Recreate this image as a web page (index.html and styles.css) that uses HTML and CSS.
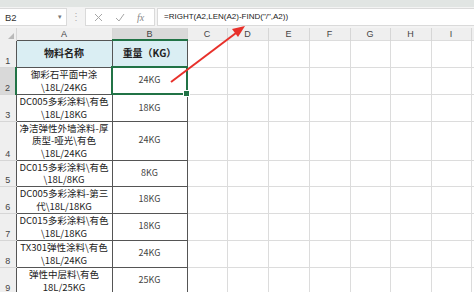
FILE: index.html
```html
<!DOCTYPE html>
<html lang="zh-CN">
<head>
    <meta charset="UTF-8">
    <title>物料重量</title>
    <link rel="stylesheet" href="styles.css">
</head>
<body>
    <div class="topband"></div>

    <div class="formula-bar">
        <div class="name-box"><span>B2</span><span class="caret">&#9662;</span></div>
        <div class="sep">&#8942;</div>
        <div class="fn-box">
            <svg class="ic" width="9" height="9" viewBox="0 0 9 9"><path d="M1 1L8 8M8 1L1 8" stroke="#a6a6a6" stroke-width="1" fill="none"/></svg>
            <svg class="ic" width="10" height="9" viewBox="0 0 10 9"><path d="M1 5L4 8L9 1" stroke="#a6a6a6" stroke-width="1" fill="none"/></svg>
            <span class="fx">fx</span>
        </div>
        <div class="formula">=RIGHT(A2,LEN(A2)-FIND("/",A2))</div>
    </div>

    <table class="sheet">
        <colgroup>
            <col class="w-hd"><col class="w-a"><col class="w-b">
            <col class="w-40"><col class="w-41"><col class="w-41"><col class="w-41">
            <col class="w-40"><col class="w-41"><col class="w-40"><col class="w-end">
        </colgroup>
        <thead>
            <tr class="r-hd">
                <th class="corner"><span class="tri"></span></th>
                <th>A</th><th class="sel">B</th><th>C</th><th>D</th><th>E</th>
                <th>F</th><th>G</th><th>H</th><th>I</th><th></th>
            </tr>
        </thead>
        <tbody>
            <tr class="h27">
                <th class="rn">1</th>
                <td class="t head">物料名称</td>
                <td class="t head">重量（KG）</td>
                <td></td><td></td><td></td><td></td><td></td><td></td><td></td><td></td>
            </tr>
            <tr class="h27 cur">
                <th class="rn">2</th>
                <td class="t">御彩石平面中涂<br>\18L/24KG</td>
                <td class="t w sel">24KG</td>
                <td></td><td></td><td></td><td></td><td></td><td></td><td></td><td></td>
            </tr>
            <tr class="h27">
                <th class="rn">3</th>
                <td class="t">DC005多彩涂料\有色<br>\18L/18KG</td>
                <td class="t w">18KG</td>
                <td></td><td></td><td></td><td></td><td></td><td></td><td></td><td></td>
            </tr>
            <tr class="h39">
                <th class="rn">4</th>
                <td class="t">净洁弹性外墙涂料-厚<br>质型-哑光\有色<br>\18L/24KG</td>
                <td class="t w">24KG</td>
                <td></td><td></td><td></td><td></td><td></td><td></td><td></td><td></td>
            </tr>
            <tr class="h26">
                <th class="rn">5</th>
                <td class="t">DC015多彩涂料\有色<br>\18L/8KG</td>
                <td class="t w">8KG</td>
                <td></td><td></td><td></td><td></td><td></td><td></td><td></td><td></td>
            </tr>
            <tr class="h27">
                <th class="rn">6</th>
                <td class="t">DC005多彩涂料-第三<br>代\18L/18KG</td>
                <td class="t w">18KG</td>
                <td></td><td></td><td></td><td></td><td></td><td></td><td></td><td></td>
            </tr>
            <tr class="h27">
                <th class="rn">7</th>
                <td class="t">DC015多彩涂料\有色<br>\18L/18KG</td>
                <td class="t w">18KG</td>
                <td></td><td></td><td></td><td></td><td></td><td></td><td></td><td></td>
            </tr>
            <tr class="h27">
                <th class="rn">8</th>
                <td class="t">TX301弹性涂料\有色<br>\18L/24KG</td>
                <td class="t w">24KG</td>
                <td></td><td></td><td></td><td></td><td></td><td></td><td></td><td></td>
            </tr>
            <tr class="h27">
                <th class="rn">9</th>
                <td class="t">弹性中层料\有色<br>18L/25KG</td>
                <td class="t w">25KG</td>
                <td></td><td></td><td></td><td></td><td></td><td></td><td></td><td></td>
            </tr>
        </tbody>
    </table>

    <!-- red pointer from B2 up to the formula -->
    <svg class="arrow" width="474" height="292" viewBox="0 0 474 292">
        <line x1="171" y1="82" x2="236" y2="33" stroke="#e8302a" stroke-width="2"/>
        <polygon points="245,26 238,37 232,29" fill="#e8302a"/>
    </svg>
</body>
</html>
```

FILE: styles.css
```css
* {
    box-sizing: border-box;
}
body {
    margin: 0;
    width: 474px;
    height: 292px;
    overflow: hidden;
    position: relative;
    background-color: #fff;
    font-family: "Noto Sans CJK SC", "Liberation Sans", sans-serif;
}
.topband {
    height: 7px;
    background-color: #e1e5e3;
}
.formula-bar {
    display: flex;
    height: 21px;
    padding: 1px 0 2px;
    background-color: #f3f3f3;
    font-family: "Liberation Sans", "Noto Sans CJK SC", sans-serif;
}
.name-box {
    width: 67px;
    display: flex;
    align-items: center;
    justify-content: space-between;
    padding: 0 4px 0 5px;
    background-color: #fff;
    border: 1px solid #dadada;
    border-left: none;
    font-size: 9.5px;
    color: #333;
}
.caret {
    font-size: 7px;
    color: #777;
}
.sep {
    width: 18px;
    text-align: center;
    font-size: 10px;
    line-height: 18px;
    color: #b0b0b0;
}
.fn-box {
    width: 70px;
    display: flex;
    align-items: center;
    padding-left: 8px;
    gap: 12px;
    background-color: #fff;
    border: 1px solid #dadada;
}
.fx {
    font-family: "Liberation Serif", serif;
    font-style: italic;
    font-size: 10px;
    color: #888;
}
.formula {
    flex: 1;
    margin-left: 2px;
    padding-left: 6px;
    background-color: #fff;
    border: 1px solid #dadada;
    border-right: none;
    font-size: 8px;
    line-height: 16px;
    color: #222;
}

/* grid */
.sheet {
    width: 474px;
    table-layout: fixed;
    border-collapse: collapse;
}
.w-hd { width: 16px; }
.w-a { width: 96px; }
.w-b { width: 75px; }
.w-40 { width: 40px; }
.w-41 { width: 41px; }
.w-end { width: 3px; }

.sheet th,
.sheet td {
    padding: 0;
}
.r-hd th {
    height: 12px;
    background-color: #efefef;
    border-right: 1px solid #d6d6d6;
    font-family: "Liberation Sans", sans-serif;
    font-weight: normal;
    font-size: 9px;
    line-height: 10px;
    color: #444;
}
.r-hd th.sel {
    background-color: #d9d9d9;
    border-bottom: 2px solid #217346;
}
.corner {
    position: relative;
}
.tri {
    position: absolute;
    right: 2px;
    bottom: 1px;
    width: 0;
    height: 0;
    border-left: 6px solid transparent;
    border-bottom: 6px solid #b9b9b9;
}
.h26 { height: 26px; }
.h27 { height: 27px; }
.h39 { height: 39px; }

.rn {
    background-color: #efefef;
    border-bottom: 1px solid #d6d6d6;
    vertical-align: bottom;
    font-family: "Liberation Sans", sans-serif;
    font-weight: normal;
    font-size: 9px;
    line-height: 11px;
    color: #444;
}
.cur .rn {
    background-color: #d9d9d9;
    border-right: 2px solid #217346;
}
.sheet td {
    border: 1px solid #dcdcdc;
}
.sheet td.t {
    border: 1px solid #555;
    text-align: center;
    vertical-align: middle;
    font-size: 9.5px;
    line-height: 12.5px;
    color: #222;
}
.sheet td.head {
    background-color: #daeef3;
    font-weight: bold;
    font-size: 10px;
}
.sheet td.w {
    font-size: 9px;
    color: #444;
}
.sheet td.sel {
    position: relative;
    border: 2px solid #217346;
}
.sheet td.sel::after {
    content: "";
    position: absolute;
    right: -4px;
    bottom: -4px;
    width: 5px;
    height: 5px;
    background-color: #217346;
    border: 1px solid #fff;
}
.arrow {
    position: absolute;
    top: 0;
    left: 0;
    pointer-events: none;
}
```
